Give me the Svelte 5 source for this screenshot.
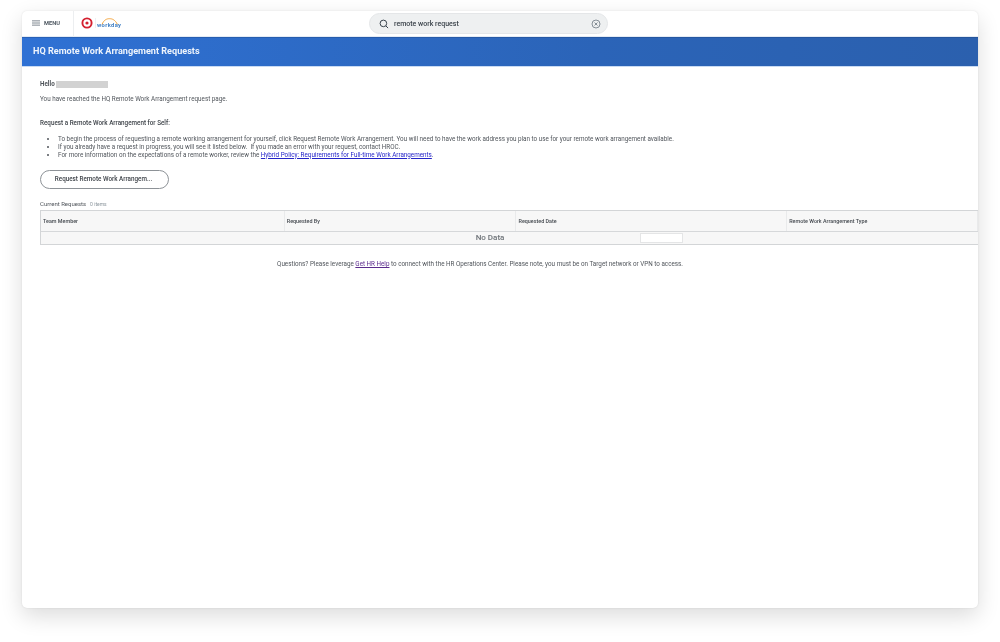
<script>
	const columns = [
		{ label: 'Team Member', width: 244 },
		{ label: 'Requested By', width: 232 },
		{ label: 'Requested Date', width: 271 },
		{ label: 'Remote Work Arrangement Type', width: 191 }
	];
</script>

<div class="page">
	<div class="window">
		<header class="topbar">
			<div class="menu">
				<svg class="burger" width="9" height="6" viewBox="0 0 9 6" aria-hidden="true">
					<path d="M0 .6h9M0 3h9M0 5.4h9" stroke="#5e6a75" stroke-width=".9" />
				</svg>
				<span>MENU</span>
			</div>
			<div class="brand">
				<svg width="12" height="12" viewBox="0 0 12 12" aria-hidden="true">
					<circle cx="6" cy="6" r="4.6" fill="none" stroke="#d4202f" stroke-width="1.9" />
					<circle cx="6" cy="6" r="1.6" fill="#d4202f" />
				</svg>
				<div class="wd">
					<svg width="19" height="7" viewBox="0 0 19 7" aria-hidden="true">
						<path d="M2 6.5C4 1.5 7 .7 9.5 .7S15 1.5 17.5 6.5" fill="none" stroke="#f2a33c" stroke-width="1" />
					</svg>
					<span>workday</span>
				</div>
			</div>
			<div class="search-slot">
				<div class="search">
					<svg width="10" height="10" viewBox="0 0 10 10" aria-hidden="true">
						<circle cx="4.4" cy="4.4" r="3.3" fill="none" stroke="#39434d" stroke-width="1" />
						<path d="M6.8 6.8l2.3 2.3" stroke="#39434d" stroke-width="1" />
					</svg>
					<span class="query">remote work request</span>
					<svg class="clear" width="10" height="10" viewBox="0 0 10 10" aria-hidden="true">
						<circle cx="5" cy="5" r="4" fill="none" stroke="#6b7680" stroke-width=".8" />
						<path d="M3.5 3.5l3 3M6.5 3.5l-3 3" stroke="#6b7680" stroke-width=".8" />
					</svg>
				</div>
			</div>
		</header>

		<div class="banner">
			<h1>HQ Remote Work Arrangement Requests</h1>
		</div>

		<main class="content">
			<p class="hello"><strong>Hello</strong> <span class="redacted"></span></p>
			<p class="intro">You have reached the HQ Remote Work Arrangement request page.</p>

			<p class="lead">Request a Remote Work Arrangement for Self:</p>
			<ul>
				<li>To begin the process of requesting a remote working arrangement for yourself, click Request Remote Work Arrangement. You will need to have the work address you plan to use for your remote work arrangement available.</li>
				<li>If you already have a request in progress, you will see it listed below.&nbsp; If you made an error with your request, contact HROC.</li>
				<li>For more information on the expectations of a remote worker, review the <a href="#policy">Hybrid Policy: Requirements for Full-time Work Arrangements</a>.</li>
			</ul>

			<button type="button">Request Remote Work Arrangem...</button>

			<div class="table-title">
				<span>Current Requests</span>
				<span class="count">0 items</span>
			</div>

			<div class="table">
				<div class="thead">
					{#each columns as col}
						<div class="th" style="width: {col.width}px">{col.label}</div>
					{/each}
				</div>
				<div class="empty">
					<span>No Data</span>
					<div class="ghost"></div>
				</div>
			</div>

			<p class="note">
				Questions? Please leverage <a class="visited" href="#help">Get HR Help</a> to connect with the HR Operations Center. Please note, you must be on Target network or VPN to access.
			</p>
		</main>
	</div>
</div>

<style>
	:global(body) {
		margin: 0;
		background: #fff;
	}

	.page {
		height: 642px;
		box-sizing: border-box;
		padding: 11px 22px 34px;
		overflow: hidden;
		font-family: Roboto, "Liberation Sans", sans-serif;
		color: #50555b;
	}

	.window {
		height: 100%;
		border-radius: 5px;
		background: #fff;
		box-shadow: 0 8px 22px rgba(0, 0, 0, 0.14), 0 0 2px rgba(0, 0, 0, 0.1);
		overflow: hidden;
	}

	.topbar {
		display: flex;
		align-items: stretch;
		height: 26px;
		position: relative;
		filter: blur(0.45px);
	}

	.menu {
		display: flex;
		align-items: center;
		gap: 4px;
		width: 52px;
		box-sizing: border-box;
		padding: 0 0 3px 10px;
		border-right: 1px solid #eceef0;
		font-size: 5.7px;
		font-weight: 700;
		color: #4f5962;
	}

	.burger {
		width: 8px;
	}

	.brand {
		display: flex;
		align-items: center;
		gap: 2px;
		padding: 0 0 3px 7px;
	}

	.wd {
		display: flex;
		flex-direction: column;
		align-items: center;
		border-left: 1px solid #eef0f2;
		padding-left: 1px;
	}

	.wd svg {
		margin-bottom: -3px;
	}

	.wd span {
		font-size: 5.8px;
		color: #3f7fc4;
		letter-spacing: 0.35px;
		font-weight: 700;
	}

	.search-slot {
		position: absolute;
		left: 347px;
		top: 2px;
	}

	.search {
		display: flex;
		align-items: center;
		width: 239px;
		height: 21px;
		box-sizing: border-box;
		padding: 0 6px 0 9px;
		border: 1px solid #e4e6e8;
		border-radius: 11px;
		background: #eef0f1;
	}

	.query {
		flex: 1;
		margin-left: 5px;
		font-size: 7px;
		font-weight: 500;
		color: #3b434b;
	}

	.banner {
		height: 29.5px;
		box-sizing: border-box;
		display: flex;
		align-items: center;
		padding-left: 11px;
		background: linear-gradient(90deg, #2f71d4, #2b64b8 60%, #2b60ae);
		border-bottom: 1px solid #c9dbf3;
		box-shadow: inset 0 1px 0 rgba(20, 50, 100, 0.25), 0 -1px 0 #e4ebf5;
	}

	h1 {
		margin: 0;
		font-size: 9.1px;
		font-weight: 700;
		color: #eef4fc;
		filter: blur(0.4px);
	}

	.content {
		padding: 13.5px 0 0 18px;
		font-size: 6.3px;
		line-height: 8px;
		filter: blur(0.45px);
	}

	p {
		margin: 0;
	}

	.hello {
		display: flex;
		align-items: center;
		gap: 1px;
		height: 8px;
	}

	.redacted {
		width: 52px;
		height: 7px;
		background: #d2d2d2;
	}

	.intro {
		margin-top: 7px;
	}

	.lead {
		margin-top: 16px;
		font-weight: 500;
		color: #3f444a;
	}

	ul {
		margin: 7.5px 0 0;
		padding-left: 18px;
	}

	a {
		color: #2323c8;
		text-decoration: underline;
	}

	a.visited {
		color: #5a2a8c;
	}

	button {
		display: block;
		width: 129px;
		height: 19px;
		margin-top: 11px;
		padding: 0 2px 0 0;
		border: 1.3px solid #8d9297;
		border-radius: 10px;
		background: #fff;
		font-family: inherit;
		font-size: 6.3px;
		font-weight: 500;
		color: #3f444a;
	}

	.table-title {
		display: flex;
		align-items: baseline;
		gap: 4px;
		margin-top: 11.5px;
		height: 9px;
		font-size: 6px;
	}

	.count {
		font-size: 5px;
		color: #8a949c;
	}

	.table {
		width: 938px;
		margin-top: 0.5px;
		border-top: 1px solid #d3d5d7;
		border-left: 1px solid #d3d5d7;
		border-bottom: 1px solid #d3d5d7;
		box-sizing: border-box;
		background: #f7f7f7;
	}

	.thead {
		display: flex;
		height: 20px;
		border-bottom: 1px solid #d6d8da;
	}

	.th {
		box-sizing: border-box;
		display: flex;
		align-items: center;
		padding-left: 2px;
		border-right: 1px solid #e9eaeb;
		font-size: 5.4px;
		font-weight: 500;
		color: #454a50;
	}

	.empty {
		position: relative;
		height: 12px;
		display: flex;
		align-items: center;
		justify-content: center;
		padding-right: 39px;
		font-size: 8px;
		font-weight: 500;
		color: #6d7277;
	}

	.ghost {
		position: absolute;
		left: 599px;
		top: 1px;
		width: 43px;
		height: 10px;
		box-sizing: border-box;
		border: 1px solid #e4e5e6;
		background: #fff;
	}

	.note {
		margin-top: 15.5px;
		width: 880px;
		text-align: center;
	}
</style>
